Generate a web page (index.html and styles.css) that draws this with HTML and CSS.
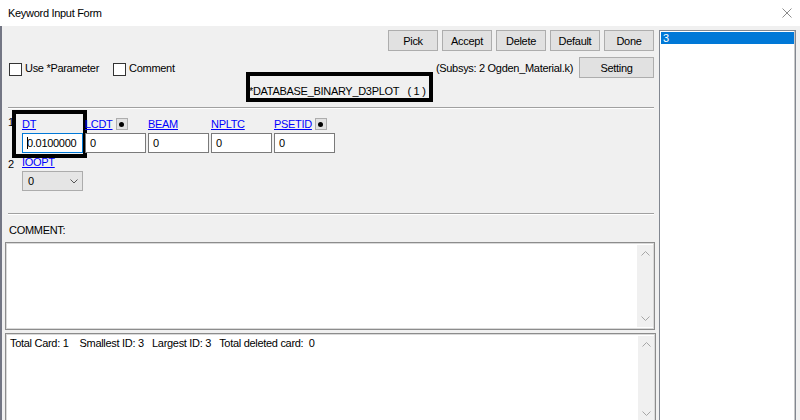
FILE: index.html
```html
<!DOCTYPE html>
<html lang="en">
<head>
    <meta charset="UTF-8">
    <title>Keyword Input Form</title>
    <link rel="stylesheet" href="styles.css">
</head>
<body>
    <div class="titlebar">
        <span class="title">Keyword Input Form</span>
        <svg class="close" width="10" height="10" viewBox="0 0 10 10">
            <path d="M0.5 0.5 L9.5 9.5 M9.5 0.5 L0.5 9.5" stroke="#8c8c8c" stroke-width="1" fill="none"/>
        </svg>
    </div>

    <div class="window">
        <div class="form">
            <div class="toolbar">
                <button class="btn">Pick</button>
                <button class="btn">Accept</button>
                <button class="btn">Delete</button>
                <button class="btn">Default</button>
                <button class="btn">Done</button>
            </div>

            <div class="options">
                <label class="check first"><span class="box"></span>Use *Parameter</label>
                <label class="check"><span class="box"></span>Comment</label>
                <span class="subsys">(Subsys: 2 Ogden_Material.k)</span>
                <button class="btn setting">Setting</button>
            </div>

            <div class="keyword">
                <span class="keyword-name">*DATABASE_BINARY_D3PLOT&nbsp;&nbsp;&nbsp;( 1 )<span class="frame keyword-frame"></span></span>
            </div>

            <div class="separator"></div>

            <div class="cards">
                <div class="card-row">
                    <span class="row-num">1</span>
                    <div class="field">
                        <div class="field-label"><a href="#">DT</a></div>
                        <div class="textfield focused"><span class="caret"></span>0.0100000</div>
                        <span class="frame field-frame"></span>
                    </div>
                    <div class="field">
                        <div class="field-label"><a href="#">LCDT</a><span class="dot-btn"></span></div>
                        <div class="textfield">0</div>
                    </div>
                    <div class="field">
                        <div class="field-label"><a href="#">BEAM</a></div>
                        <div class="textfield">0</div>
                    </div>
                    <div class="field">
                        <div class="field-label"><a href="#">NPLTC</a></div>
                        <div class="textfield">0</div>
                    </div>
                    <div class="field">
                        <div class="field-label"><a href="#">PSETID</a><span class="dot-btn"></span></div>
                        <div class="textfield">0</div>
                    </div>
                </div>
                <div class="card-row second">
                    <span class="row-num">2</span>
                    <div class="field">
                        <div class="field-label"><a href="#">IOOPT</a></div>
                        <div class="dropdown">
                            <span>0</span>
                            <svg width="8" height="5" viewBox="0 0 8 5">
                                <path d="M0.5 0.5 L4 4 L7.5 0.5" stroke="#555" stroke-width="1" fill="none"/>
                            </svg>
                        </div>
                    </div>
                </div>
            </div>

            <div class="separator"></div>

            <div class="comment-label">COMMENT:</div>

            <div class="textbox comment">
                <div class="textbox-body"></div>
                <div class="vscroll">
                    <svg width="9" height="5" viewBox="0 0 9 5"><path d="M0.5 4.5 L4.5 0.5 L8.5 4.5" stroke="#a6a6a6" fill="none"/></svg>
                    <svg width="9" height="5" viewBox="0 0 9 5"><path d="M0.5 0.5 L4.5 4.5 L8.5 0.5" stroke="#a6a6a6" fill="none"/></svg>
                </div>
            </div>

            <div class="textbox status">
                <div class="textbox-body status-text">Total Card: 1    Smallest ID: 3   Largest ID: 3   Total deleted card:  0</div>
                <div class="vscroll">
                    <svg width="9" height="5" viewBox="0 0 9 5"><path d="M0.5 4.5 L4.5 0.5 L8.5 4.5" stroke="#a6a6a6" fill="none"/></svg>
                    <svg width="9" height="5" viewBox="0 0 9 5"><path d="M0.5 0.5 L4.5 4.5 L8.5 0.5" stroke="#a6a6a6" fill="none"/></svg>
                </div>
            </div>
        </div>

        <div class="listbox">
            <div class="list-item selected">3</div>
        </div>
    </div>
</body>
</html>
```

FILE: styles.css
```css
body {
    margin: 0;
    width: 800px;
    height: 420px;
    overflow: hidden;
    background: #f0f0f0;
    font-family: "Liberation Sans", Arial, sans-serif;
    font-size: 11px;
    letter-spacing: -0.3px;
    color: #000;
}
.titlebar {
    height: 26px;
    background: #fff;
    display: flex;
    align-items: center;
    justify-content: space-between;
    padding: 0 8px 0 8px;
}
.window {
    display: flex;
    height: 394px;
    overflow: hidden;
    border-left: 2px solid #737684;
}
.form {
    width: 657px;
    flex-shrink: 0;
    display: flex;
    flex-direction: column;
}
.form > * {
    flex-shrink: 0;
}
.btn {
    height: 21px;
    padding: 0;
    background: #e1e1e1;
    border: 1px solid #adadad;
    font-family: inherit;
    font-size: 11px;
    letter-spacing: inherit;
    color: #000;
}
.toolbar {
    display: flex;
    justify-content: flex-end;
    gap: 4px;
    padding: 4px 5px 0 0;
}
.toolbar .btn {
    width: 50px;
}
.options {
    display: flex;
    align-items: center;
    height: 21px;
    margin-top: 6px;
    padding: 0 5px 0 7px;
}
.check {
    display: flex;
    align-items: center;
    gap: 3px;
    margin-top: 1px;
}
.check.first {
    margin-right: 14px;
}
.box {
    width: 11px;
    height: 11px;
    margin-top: 2px;
    background: #fff;
    border: 1px solid #333;
}
.subsys {
    margin-left: auto;
    margin-right: 6px;
}
.setting {
    width: 75px;
}
.keyword {
    margin-top: 7px;
    padding-left: 247px;
    line-height: 13px;
}
.keyword-name {
    position: relative;
    white-space: pre;
}
.frame {
    position: absolute;
    border: 4px solid #000;
    box-sizing: border-box;
}
.keyword-frame {
    left: -3px;
    top: -13px;
    width: 187px;
    height: 30px;
}
.separator {
    height: 0;
    margin: 9px 5px 0 6px;
    border-top: 1px solid #a0a0a0;
    border-bottom: 1px solid #fff;
}
.cards {
    padding: 8px 0 0 6px;
    height: 87px;
}
.card-row {
    display: flex;
}
.card-row.second {
    margin-top: 2px;
}
.row-num {
    width: 14px;
    line-height: 13px;
    margin-top: -1px;
}
.second .row-num {
    margin-top: 3px;
}
.field {
    position: relative;
    width: 61px;
    margin-right: 2px;
}
.field-label {
    height: 14px;
    display: flex;
    align-items: center;
    gap: 3px;
}
.field-label a {
    color: #0000ff;
    text-decoration: underline;
}
.dot-btn {
    width: 10px;
    height: 10px;
    background: #e1e1e1;
    border: 1px solid #adadad;
    display: flex;
    align-items: center;
    justify-content: center;
}
.dot-btn::after {
    content: "";
    width: 5px;
    height: 5px;
    border-radius: 50%;
    background: #000;
}
.textfield {
    margin-top: 2px;
    height: 20px;
    box-sizing: border-box;
    background: #fff;
    border: 1px solid #7a7a7a;
    padding-left: 4px;
    display: flex;
    align-items: center;
}
.textfield.focused {
    border-color: #0078d7;
}
.caret {
    width: 1px;
    height: 12px;
    background: #000;
    margin-right: -1px;
}
.field-frame {
    left: -10px;
    top: -7px;
    width: 75px;
    height: 48px;
}
.dropdown {
    margin-top: 2px;
    height: 20px;
    box-sizing: border-box;
    background: #e5e5e5;
    border: 1px solid #acacac;
    padding: 0 4px 0 5px;
    display: flex;
    align-items: center;
    justify-content: space-between;
}
.comment-label {
    margin: 9px 0 0 7px;
    line-height: 13px;
}
.textbox {
    display: flex;
    margin-left: 3px;
    background: #fff;
    border: 1px solid #8c8c8c;
    box-shadow: inset 0 0 0 1px #d9d9d9;
    box-sizing: border-box;
}
.comment {
    margin-top: 5px;
    width: 650px;
    height: 88px;
}
.status {
    margin-top: 3px;
    width: 651px;
    height: 92px;
}
.textbox-body {
    flex: 1;
}
.status-text {
    white-space: pre;
    padding: 3px 0 0 4px;
    line-height: 13px;
}
.vscroll {
    width: 16px;
    margin: 2px 1px 2px 0;
    background: #f0f0f0;
    display: flex;
    flex-direction: column;
    align-items: center;
    justify-content: space-between;
    padding: 6px 0;
}
.listbox {
    width: 137px;
    height: 392px;
    margin-top: 4px;
    box-sizing: border-box;
    background: #fff;
    border: 1px solid #828790;
    box-shadow: inset -1px 0 0 #c8c8c8;
    padding: 1px;
}
.list-item {
    height: 12px;
    line-height: 12px;
    padding-left: 2px;
}
.list-item.selected {
    background: #0078d7;
    color: #fff;
}
```
